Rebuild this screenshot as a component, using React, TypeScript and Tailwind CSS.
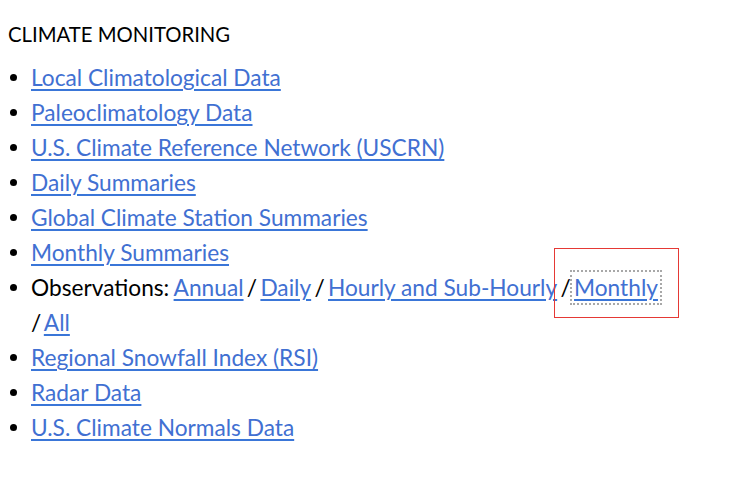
import React from "react";

const links = [
  "Local Climatological Data",
  "Paleoclimatology Data",
  "U.S. Climate Reference Network (USCRN)",
  "Daily Summaries",
  "Global Climate Station Summaries",
  "Monthly Summaries",
];

const after = [
  "Regional Snowfall Index (RSI)",
  "Radar Data",
  "U.S. Climate Normals Data",
];

const linkCls =
  "text-[#4170d2] underline decoration-[#3a76d8] decoration-2 underline-offset-[3px]";

const liCls =
  "relative before:content-[''] before:absolute before:left-[-21px] before:top-[14px] before:w-[7px] before:h-[7px] before:rounded-full before:bg-black";

const Sep = () => <span className="[word-spacing:-2.5px]"> / </span>;

export default function App() {
  return (
    <div
      className="w-[756px] h-[500px] bg-white p-2 text-black"
      style={{ fontFamily: "Lato, 'Noto Sans', sans-serif" }}
    >
      <div className="w-[690px]">
        <h2 className="text-[20.3px] leading-[28px] mt-[12px] mb-[12px] font-normal">
          CLIMATE MONITORING
        </h2>
        <ul className="pl-[23px] text-[22.7px] leading-[35px]">
          {links.map((l) => (
            <li key={l} className={liCls}>
              <a href="#" className={linkCls}>
                {l}
              </a>
            </li>
          ))}
          <li className={liCls}>
            Observations:
            <span className="[word-spacing:-1.5px]"> </span>
            <a href="#" className={linkCls}>
              Annual
            </a>
            <Sep />
            <a href="#" className={linkCls}>
              Daily
            </a>
            <Sep />
            <a href="#" className={linkCls}>
              Hourly and Sub-Hourly
            </a>
            <Sep />
            <span className="relative inline-block">
              <a
                href="#"
                className={linkCls + " outline-2 outline-dotted outline-[#a8a8a8] outline-offset-[2px]"}
              >
                Monthly
              </a>
              <span className="absolute left-[-20px] top-[-22px] w-[125px] h-[70px] border border-[#e53935] pointer-events-none" />
            </span>{" "}
            <span className="whitespace-nowrap [word-spacing:-2.5px]">
              /{" "}
              <a href="#" className={linkCls}>
                All
              </a>
            </span>
          </li>
          {after.map((l) => (
            <li key={l} className={liCls}>
              <a href="#" className={linkCls}>
                {l}
              </a>
            </li>
          ))}
        </ul>
      </div>
    </div>
  );
}
